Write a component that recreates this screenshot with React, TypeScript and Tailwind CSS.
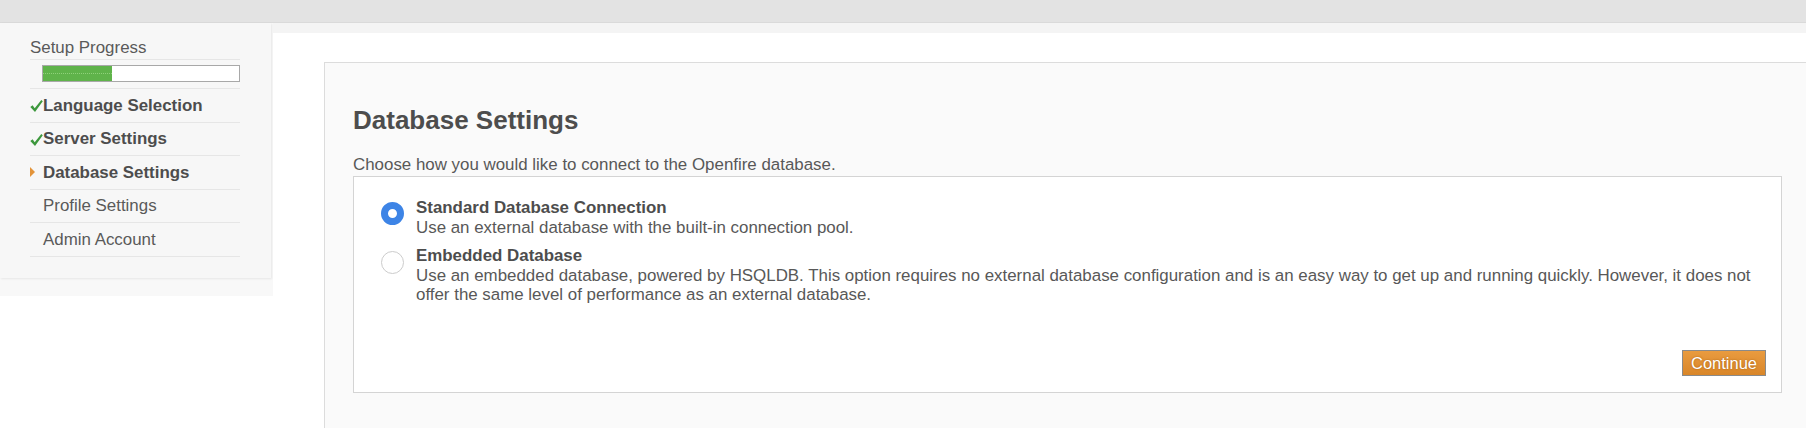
const steps = [
  { label: "Language Selection", state: "done" },
  { label: "Server Settings", state: "done" },
  { label: "Database Settings", state: "current" },
  { label: "Profile Settings", state: "todo" },
  { label: "Admin Account", state: "todo" },
];

const Check = () => (
  <svg width="13" height="14" viewBox="0 0 13 14" className="shrink-0 mt-[2px]">
    <path d="M0.3 8 L2.6 6.2 L4.7 9.2 L11.3 1 L12.8 2.2 L5 13 Z" fill="#3d983d" />
  </svg>
);

const Arrow = () => (
  <span className="w-[13px] shrink-0 flex">
    <svg width="5" height="10" viewBox="0 0 5 10">
      <path d="M0 0 L5 5 L0 10 Z" fill="#e3943a" />
    </svg>
  </span>
);

const Sidebar = () => {
  return (
    <div className="w-[273px] shrink-0 bg-[#f8f8f8] pb-[18px]">
      <div className="w-[271px] h-[255px] bg-[#f7f7f7] shadow-[1px_1px_2px_rgba(0,0,0,0.07)] pl-[30px] pr-[31px] pt-[15px]">
        <div className="h-[22px] border-b border-[#e6e6e6] text-[#5a5a5a] leading-[19.5px]">Setup Progress</div>
        <div className="h-[29px] border-b border-[#e6e6e6] pl-[12px] pt-[5px]">
          <div className="h-[17px] border border-[#a8a8a8] bg-white">
            <div className="h-full w-[69px] bg-[#5fb34a] flex items-center">
              <div className="w-full border-t border-dotted border-[#8fd17a]" />
            </div>
          </div>
        </div>
        {steps.map((s) => (
          <div key={s.label} className="h-[33.6px] border-b border-[#e6e6e6] flex items-center">
            {s.state === "done" && <Check />}
            {s.state === "current" && <Arrow />}
            {s.state === "todo" && <span className="w-[13px] shrink-0" />}
            <span className={s.state === "todo" ? "text-[#5a5a5a]" : "font-bold text-[#4d4d4d]"}>{s.label}</span>
          </div>
        ))}
      </div>
    </div>
  );
};

const Radio = ({ checked }: { checked: boolean }) =>
  checked ? (
    <span className="mt-[3.5px] w-[23px] h-[23px] rounded-full border-[7px] border-[#3d84e6] bg-white shrink-0" />
  ) : (
    <span className="mt-[4.5px] w-[23px] h-[23px] rounded-full border-[1.5px] border-[#cccccc] bg-white shrink-0" />
  );

export default function App() {
  return (
    <div className="w-[1806px] h-[428px] overflow-hidden bg-white font-['Liberation_Sans',Arial,sans-serif] text-[16.9px] leading-[19.5px] text-[#585858]">
      <div className="h-[23px] bg-[#e3e3e3] border-b border-[#dadada]" />
      <div className="flex items-start">
        <Sidebar />
        <div className="flex-1 bg-[#f4f4f4] pt-[10px]">
          <div className="bg-white pl-[51px] pt-[29px]">
            <div className="border-t border-l border-[#dcdcdc] bg-[#fafafa] pl-[28px] pr-[24px] pt-[42px] pb-[40px]">
              <h1 className="text-[26px] leading-[30px] font-bold text-[#4d4d4d]">Database Settings</h1>
              <p className="mt-[20px]">Choose how you would like to connect to the Openfire database.</p>
              <div className="mt-[1.5px] border border-[#d4d4d4] bg-white pl-[27px] pr-[15px] pt-[21px] pb-[16px]">
                <div className="flex gap-[12px]">
                  <Radio checked />
                  <div>
                    <div className="font-bold text-[#4d4d4d]">Standard Database Connection</div>
                    <div>Use an external database with the built-in connection pool.</div>
                  </div>
                </div>
                <div className="flex gap-[12px] mt-[9px]">
                  <Radio checked={false} />
                  <div>
                    <div className="font-bold text-[#4d4d4d]">Embedded Database</div>
                    <div>
                      Use an embedded database, powered by HSQLDB. This option requires no external database configuration and is an easy way to get up and running quickly. However, it does not
                      <br />
                      offer the same level of performance as an external database.
                    </div>
                  </div>
                </div>
                <div className="flex justify-end mt-[45px]">
                  <button className="w-[84px] h-[26px] border border-[#8a8a8a] bg-gradient-to-b from-[#e99b3f] to-[#d98628] text-white text-[16.5px] leading-[20px] [text-shadow:0_0_2px_rgba(150,80,0,0.8)]">
                    Continue
                  </button>
                </div>
              </div>
            </div>
          </div>
        </div>
      </div>
    </div>
  );
}
